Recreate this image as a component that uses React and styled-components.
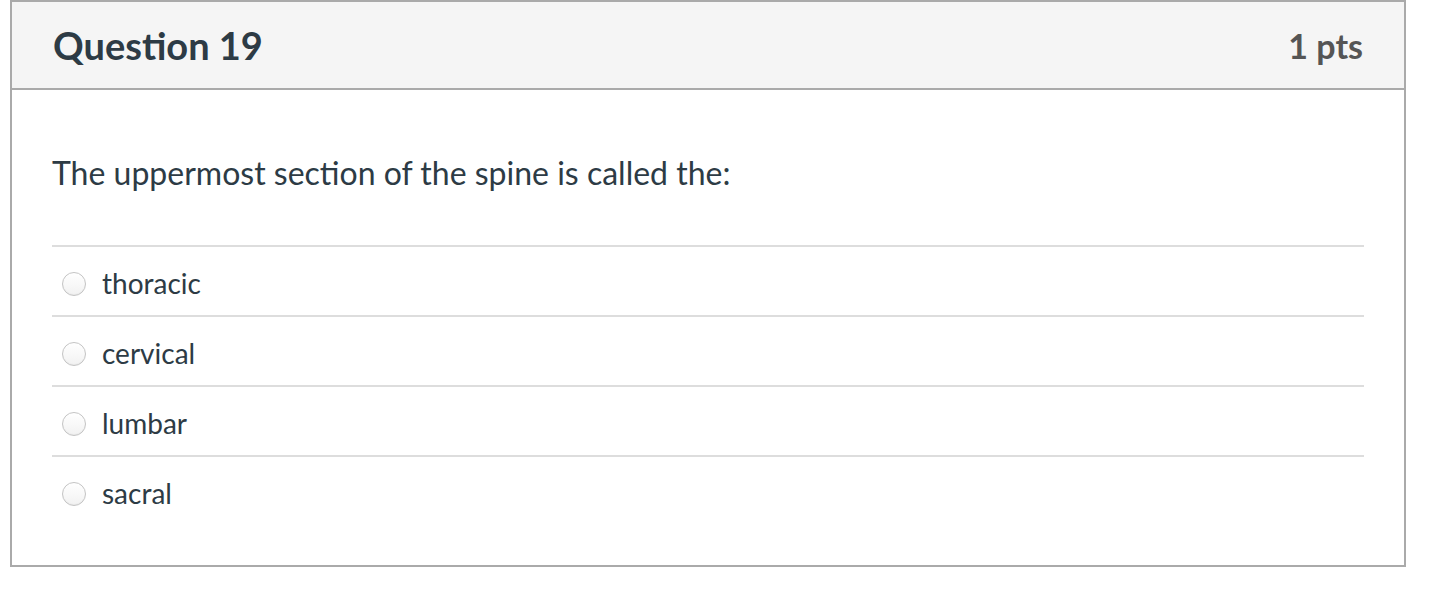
import React from "react";
import styled, { createGlobalStyle } from "styled-components";

const Global = createGlobalStyle`
  html, body { margin: 0; padding: 0; background: #fff; }
  body { font-family: Lato, "Open Sans", sans-serif; }
`;

const Page = styled.div`
  padding: 0 50px 0 10px;
`;

const Card = styled.div`
  width: 1396px;
  box-sizing: border-box;
  border: 2px solid #aaaaaa;
  background: #fff;
`;

const Header = styled.div`
  display: flex;
  align-items: center;
  justify-content: space-between;
  height: 88px;
  box-sizing: border-box;
  padding: 0 41px 0 41px;
  background: #f5f5f5;
  border-bottom: 2px solid #aaaaaa;
`;

const Title = styled.h2`
  margin: 0;
  font-size: 38px;
  font-weight: 700;
  color: #2d3b45;
`;

const Points = styled.div`
  font-size: 34px;
  font-weight: 700;
  color: #555555;
`;

const Body = styled.div`
  padding: 64px 40px 40px 40px;
`;

const Prompt = styled.p`
  margin: 0 0 53px 0;
  font-size: 32px;
  line-height: 38px;
  color: #2d3b45;
`;

const Answers = styled.div`
  display: flex;
  flex-direction: column;
`;

const Answer = styled.label`
  display: flex;
  align-items: center;
  height: 70px;
  box-sizing: border-box;
  border-top: 2px solid #dddddd;
  padding: 4px 0 0 10px;
  font-size: 28px;
  color: #2d3b45;
`;

const Radio = styled.span`
  width: 24px;
  height: 24px;
  box-sizing: border-box;
  border-radius: 50%;
  border: 1px solid #c4c4c4;
  background: linear-gradient(#ffffff, #f2f2f2);
  box-shadow: inset 0 -1px 1px rgba(0, 0, 0, 0.04);
  margin: 2px 16px 0 0;
  flex: none;
`;

const options = ["thoracic", "cervical", "lumbar", "sacral"];

export default function App() {
  return (
    <>
      <Global />
      <Page>
        <Card>
          <Header>
            <Title>Question 19</Title>
            <Points>1 pts</Points>
          </Header>
          <Body>
            <Prompt>The uppermost section of the spine is called the:</Prompt>
            <Answers>
              {options.map((o) => (
                <Answer key={o}>
                  <Radio />
                  {o}
                </Answer>
              ))}
            </Answers>
          </Body>
        </Card>
      </Page>
    </>
  );
}
